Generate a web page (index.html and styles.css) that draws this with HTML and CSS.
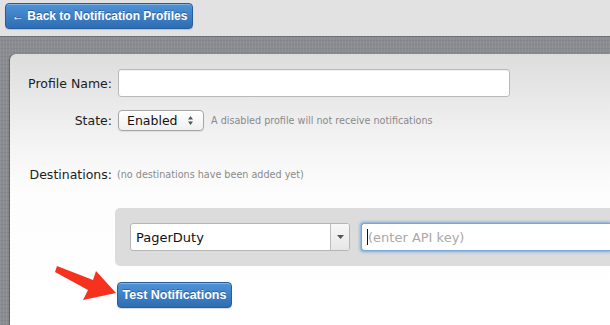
FILE: index.html
```html
<!DOCTYPE html>
<html>
<head>
<meta charset="utf-8">
<link rel="stylesheet" href="styles.css">
</head>
<body>
<div class="topbar">
  <button class="btn btn-back">← Back to Notification Profiles</button>
</div>
<div class="stage">
  <div class="panel">
    <div class="row row-name">
      <label class="lbl">Profile Name:</label>
      <div class="text-input name-input"></div>
    </div>
    <div class="row row-state">
      <label class="lbl">State:</label>
      <div class="mac-select">
        <span>Enabled</span>
        <svg class="updown" width="7" height="11" viewBox="0 0 7 11"><path d="M3.5 1 L6 4.5 H1 Z M3.5 10 L6 6.5 H1 Z" fill="#555"/></svg>
      </div>
      <span class="help">A disabled profile will not receive notifications</span>
    </div>
    <div class="row row-dest">
      <label class="lbl">Destinations:</label>
      <span class="help help-dest">(no destinations have been added yet)</span>
    </div>
    <div class="dest-box">
      <div class="combo">
        <span class="combo-text">PagerDuty</span>
        <span class="combo-arrow"><svg width="7" height="4" viewBox="0 0 7 4"><path d="M0 0 H7 L3.5 4 Z" fill="#555"/></svg></span>
      </div>
      <div class="api-input"><span class="caret"></span><span class="ph">(enter API key)</span></div>
    </div>
    <div class="actions">
      <button class="btn btn-test">Test Notifications</button>
    </div>
    <svg class="arrow" width="64" height="38" viewBox="54 263 64 38">
      <path d="M57 266 L93 280 L96 271 L116 293 L83 300 L88 290 L55 272 Z" fill="#f5321d"/>
    </svg>
  </div>
</div>
</body>
</html>
```

FILE: styles.css
```css
* { box-sizing: border-box; }
html, body { margin: 0; padding: 0; }
body {
  width: 610px;
  height: 325px;
  overflow: hidden;
  background: #e2e2e2;
  font-family: "DejaVu Sans", "Liberation Sans", sans-serif;
  font-size: 12px;
  color: #222;
}
.topbar {
  height: 36px;
  padding: 3px 5px 0;
}
.btn {
  display: inline-flex;
  align-items: center;
  height: 26px;
  padding: 0 8px;
  border: 1px solid #2a5c95;
  border-radius: 4px;
  background: linear-gradient(#4f93d8, #2d6db3);
  box-shadow: inset 0 1px 0 rgba(255,255,255,0.3), 0 1px 1px rgba(0,0,0,0.15);
  color: #fff;
  font-family: "Liberation Sans", "DejaVu Sans", sans-serif;
  font-weight: bold;
  font-size: 12px;
  white-space: nowrap;
  text-shadow: 0 -1px 0 rgba(0,0,0,0.3);
}
.btn-back { width: 188px; padding-left: 6px; }
.btn-test { width: 115px; justify-content: center; padding: 0; font-size: 12.5px; }
.stage {
  height: 289px;
  border-top: 1px solid #6e7074;
  background-color: #8a8c91;
  background-image:
    repeating-linear-gradient(90deg, rgba(255,255,255,0.06) 0 1px, transparent 1px 3px),
    repeating-linear-gradient(0deg, rgba(0,0,0,0.05) 0 1px, transparent 1px 4px);
  padding: 17px 0 0 10px;
}
.panel {
  position: relative;
  height: 100%;
  border-radius: 6px 0 0 0;
  background: linear-gradient(#dddddd, #f4f4f4 90px, #fdfdfd 140px, #ffffff);
  box-shadow: -1px 0 1px rgba(0,0,0,0.35);
  padding-top: 15px;
}
.row {
  display: flex;
  align-items: center;
}
.lbl {
  width: 102px;
  text-align: right;
  font-size: 12.5px;
  color: #1c1c1c;
  margin-right: 6px;
  flex-shrink: 0;
}
.text-input {
  background: #fff;
  border: 1px solid #b9b9b9;
  border-radius: 3px;
  box-shadow: inset 0 1px 1px rgba(0,0,0,0.06);
}
.name-input { width: 392px; height: 28px; }
.row-state { margin-top: 13px; }
.mac-select {
  width: 86px;
  height: 21px;
  border: 1px solid #a6a6a6;
  border-radius: 4px;
  background: linear-gradient(#ffffff, #f0f0f0);
  box-shadow: 0 1px 1px rgba(0,0,0,0.08);
  display: flex;
  align-items: center;
  justify-content: space-between;
  padding: 0 9px 0 8px;
  font-size: 12.5px;
  color: #111;
}
.help {
  font-family: "DejaVu Sans Condensed", "DejaVu Sans", sans-serif;
  font-size: 10.7px;
  color: #8a8a8a;
  margin-left: 7px;
}
.row-dest { margin-top: 36px; }
.help-dest { margin-left: -1px; }
.dest-box {
  margin: 26px 0 0 105px;
  height: 58px;
  background: #dcdcdc;
  border-radius: 5px 0 0 5px;
  padding: 15px 0 0 15px;
  display: flex;
  gap: 11px;
}
.combo {
  width: 220px;
  height: 28px;
  background: #fff;
  border: 1px solid #b5b5b5;
  border-radius: 3px;
  display: flex;
  align-items: center;
}
.combo-text {
  flex: 1;
  padding-left: 5px;
  font-size: 13px;
  color: #111;
}
.combo-arrow {
  width: 19px;
  height: 100%;
  border-left: 1px solid #bdbdbd;
  background: linear-gradient(#f8f8f8, #e6e6e6);
  border-radius: 0 2px 2px 0;
  display: flex;
  align-items: center;
  justify-content: center;
}
.api-input {
  flex: 1;
  height: 28px;
  background: #fff;
  border: 1px solid #7aa7d8;
  border-right: none;
  border-radius: 3px 0 0 3px;
  box-shadow: 0 0 3px 1px rgba(82,150,220,0.75);
  display: flex;
  align-items: center;
  padding-left: 5px;
}
.caret {
  width: 1px;
  height: 16px;
  background: #111;
}
.ph {
  font-size: 13px;
  color: #a9a9a9;
}
.actions {
  margin: 16px 0 0 107px;
}
.arrow {
  position: absolute;
  left: 44px;
  top: 209px;
}
```
